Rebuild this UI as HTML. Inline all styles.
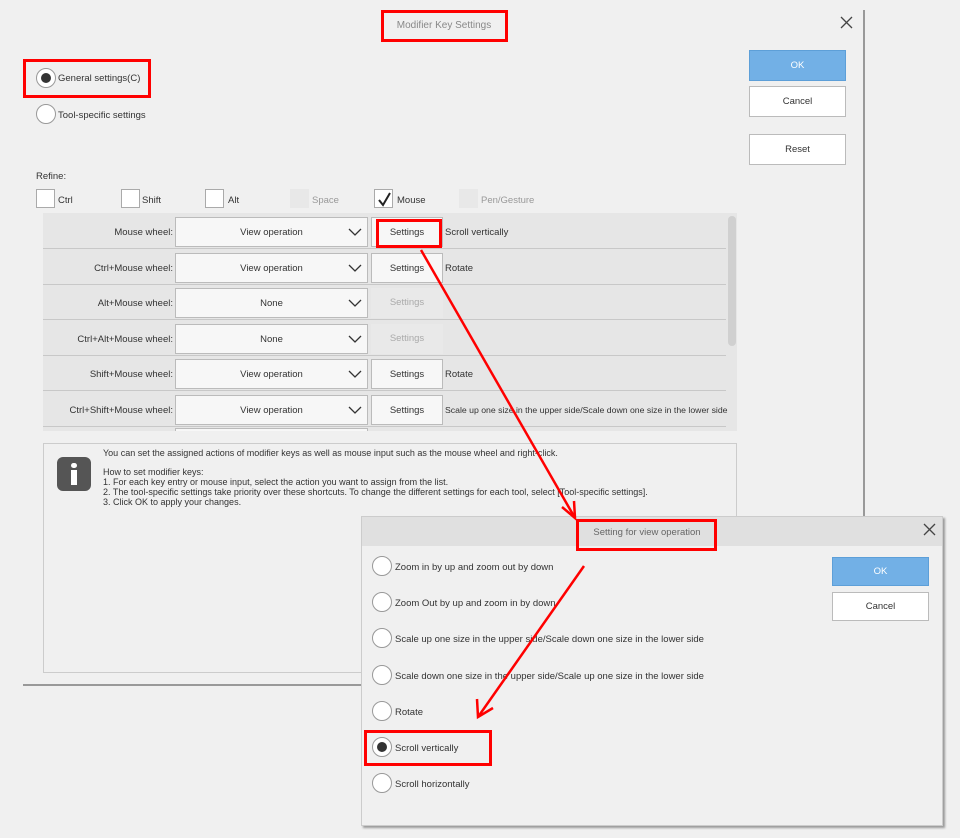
<!DOCTYPE html>
<html><head><meta charset="utf-8"><style>
*{box-sizing:border-box;margin:0;padding:0}
body{width:960px;height:838px;background:#f0f0f0;font-family:"Liberation Sans","Noto Sans CJK JP",sans-serif;font-size:9.5px;color:#333;position:relative;overflow:hidden}
.a{position:absolute}
.red{position:absolute;border:3px solid #f00}
.radio{position:absolute;width:20px;height:20px;border:1px solid #999;border-radius:50%;background:#fff}
.radio.on::after{content:"";position:absolute;left:4px;top:4px;width:10px;height:10px;border-radius:50%;background:#333}
.cb{position:absolute;width:19px;height:19px;border:1px solid #aaa;background:#fff}
.cb.dis{border:none;background:#e8e8e8}
.row{position:absolute;left:43px;width:683px;height:35px;background:#e6e6e6;border-bottom:1px solid #c8c8c8}
.lbl{position:absolute;right:553px;top:13px;white-space:nowrap}
.dd{position:absolute;left:132px;top:3px;width:193px;height:30px;background:#f7f7f7;border:1px solid #bbb;text-align:center;line-height:30px}
.dd svg{position:absolute;right:5px;top:10px}
.st{position:absolute;left:328px;top:3px;width:72px;height:30px;background:#f7f7f7;border:1px solid #bbb;text-align:center;line-height:30px}
.st.dis{background:#e9e9e9;border:none;color:#aaa}
.res{position:absolute;left:402px;top:13px;white-space:nowrap}
.btn{position:absolute;border:1px solid #bbb;background:#fff;text-align:center}
</style></head><body>
<div class="a" style="left:23px;top:10px;width:842px;height:676px;border-right:2px solid #999;border-bottom:2px solid #999"></div>
<div class="a" style="left:381px;top:20px;width:126px;text-align:center;color:#888;font-size:10px">Modifier Key Settings</div>
<div class="red" style="left:381px;top:10px;width:127px;height:32px"></div>
<svg class="a" style="left:840px;top:16px" width="13" height="13"><path d="M1 1L12 12M12 1L1 12" stroke="#444" stroke-width="1.3"/></svg>
<div class="btn" style="left:749px;top:50px;width:97px;height:31px;background:#72b0e6;border-color:#5d9fd8;color:#fff;line-height:30px">OK</div>
<div class="btn" style="left:749px;top:86px;width:97px;height:31px;line-height:30px">Cancel</div>
<div class="btn" style="left:749px;top:134px;width:97px;height:31px;line-height:30px">Reset</div>

<div class="radio on" style="left:36px;top:68px"></div>
<div class="a" style="left:58px;top:73px">General settings(C)</div>
<div class="red" style="left:23px;top:59px;width:128px;height:39px"></div>
<div class="radio" style="left:36px;top:104px"></div>
<div class="a" style="left:58px;top:110px">Tool-specific settings</div>

<div class="a" style="left:36px;top:171px">Refine:</div>
<div class="cb" style="left:36px;top:189px"></div><div class="a" style="left:58px;top:195px">Ctrl</div>
<div class="cb" style="left:121px;top:189px"></div><div class="a" style="left:142px;top:195px">Shift</div>
<div class="cb" style="left:205px;top:189px"></div><div class="a" style="left:228px;top:195px">Alt</div>
<div class="cb dis" style="left:290px;top:189px"></div><div class="a" style="left:312px;top:195px;color:#999">Space</div>
<div class="cb" style="left:374px;top:189px"><svg width="19" height="19"><path d="M4 10L8 15L15 3" stroke="#222" stroke-width="2" fill="none"/></svg></div><div class="a" style="left:397px;top:195px">Mouse</div>
<div class="cb dis" style="left:459px;top:189px"></div><div class="a" style="left:481px;top:195px;color:#999">Pen/Gesture</div>

<div class="a" style="left:43px;top:213px;width:694px;height:218px;background:#e6e6e6;overflow:hidden"><div class="a" style="left:132px;top:215px;width:193px;height:10px;background:#f7f7f7;border:1px solid #bbb"></div></div>
<div class="a" style="left:728px;top:216px;width:8px;height:130px;background:#d0d0d0;border-radius:4px"></div>
<div class="row" style="top:214px"><span class="lbl">Mouse wheel:</span><div class="dd">View operation<svg width="14" height="9"><path d="M1 1L7 7L13 1" stroke="#333" fill="none" stroke-width="1.3"/></svg></div><div class="st">Settings</div><span class="res">Scroll vertically</span></div>
<div class="row" style="top:250px"><span class="lbl">Ctrl+Mouse wheel:</span><div class="dd">View operation<svg width="14" height="9"><path d="M1 1L7 7L13 1" stroke="#333" fill="none" stroke-width="1.3"/></svg></div><div class="st">Settings</div><span class="res">Rotate</span></div>
<div class="row" style="top:285px"><span class="lbl">Alt+Mouse wheel:</span><div class="dd">None<svg width="14" height="9"><path d="M1 1L7 7L13 1" stroke="#333" fill="none" stroke-width="1.3"/></svg></div><div class="st dis">Settings</div></div>
<div class="row" style="top:321px"><span class="lbl">Ctrl+Alt+Mouse wheel:</span><div class="dd">None<svg width="14" height="9"><path d="M1 1L7 7L13 1" stroke="#333" fill="none" stroke-width="1.3"/></svg></div><div class="st dis">Settings</div></div>
<div class="row" style="top:356px"><span class="lbl">Shift+Mouse wheel:</span><div class="dd">View operation<svg width="14" height="9"><path d="M1 1L7 7L13 1" stroke="#333" fill="none" stroke-width="1.3"/></svg></div><div class="st">Settings</div><span class="res">Rotate</span></div>
<div class="row" style="top:392px"><span class="lbl">Ctrl+Shift+Mouse wheel:</span><div class="dd">View operation<svg width="14" height="9"><path d="M1 1L7 7L13 1" stroke="#333" fill="none" stroke-width="1.3"/></svg></div><div class="st">Settings</div><span class="res" style="font-size:8.7px">Scale up one size in the upper side/Scale down one size in the lower side</span></div>
<div class="red" style="left:376px;top:219px;width:66px;height:29px"></div>

<div class="a" style="left:43px;top:443px;width:694px;height:230px;border:1px solid #ccc;background:#f0f0f0"></div>
<div class="a" style="left:57px;top:457px;width:34px;height:34px;background:#555;border-radius:6px"><div class="a" style="left:14px;top:6px;width:6px;height:5px;border-radius:3px;background:#fff"></div><div class="a" style="left:14px;top:13px;width:6px;height:15px;background:#fff"></div></div>
<div class="a" style="left:103px;top:449px;line-height:9.7px;font-size:9px;white-space:nowrap">You can set the assigned actions of modifier keys as well as mouse input such as the mouse wheel and right-click.<br><br>How to set modifier keys:<br>1. For each key entry or mouse input, select the action you want to assign from the list.<br>2. The tool-specific settings take priority over these shortcuts. To change the different settings for each tool, select [Tool-specific settings].<br>3. Click OK to apply your changes.</div>

<div class="a" style="left:361px;top:516px;width:582px;height:310px;background:#f0f0f0;box-shadow:2px 2px 2px #999;border:1px solid #ccc"></div>
<div class="a" style="left:362px;top:517px;width:580px;height:29px;background:#e0e0e0"></div>
<div class="a" style="left:577px;top:527px;width:140px;text-align:center;color:#666">Setting for view operation</div>
<div class="red" style="left:576px;top:519px;width:141px;height:32px"></div>
<svg class="a" style="left:923px;top:523px" width="13" height="13"><path d="M1 1L12 12M12 1L1 12" stroke="#444" stroke-width="1.3"/></svg>
<div class="btn" style="left:832px;top:557px;width:97px;height:29px;background:#72b0e6;border-color:#5d9fd8;color:#fff;line-height:28px">OK</div>
<div class="btn" style="left:832px;top:592px;width:97px;height:29px;line-height:28px">Cancel</div>
<div class="radio" style="left:372px;top:556px"></div><div class="a" style="left:395px;top:562px">Zoom in by up and zoom out by down</div>
<div class="radio" style="left:372px;top:592px"></div><div class="a" style="left:395px;top:598px">Zoom Out by up and zoom in by down</div>
<div class="radio" style="left:372px;top:628px"></div><div class="a" style="left:395px;top:634px">Scale up one size in the upper side/Scale down one size in the lower side</div>
<div class="radio" style="left:372px;top:665px"></div><div class="a" style="left:395px;top:671px">Scale down one size in the upper side/Scale up one size in the lower side</div>
<div class="radio" style="left:372px;top:701px"></div><div class="a" style="left:395px;top:707px">Rotate</div>
<div class="radio on" style="left:372px;top:737px"></div><div class="a" style="left:395px;top:743px">Scroll vertically</div>
<div class="red" style="left:364px;top:730px;width:128px;height:36px"></div>
<div class="radio" style="left:372px;top:773px"></div><div class="a" style="left:395px;top:779px">Scroll horizontally</div>

<svg class="a" style="left:0;top:0" width="960" height="838">
<g stroke="#f00" stroke-width="2.5" fill="none">
<path d="M421 250L575 518"/><path d="M562 507L575 518L574 501"/>
<path d="M584 566L478 717"/><path d="M477 699L478 717L493 708"/>
</g></svg>
</body></html>
